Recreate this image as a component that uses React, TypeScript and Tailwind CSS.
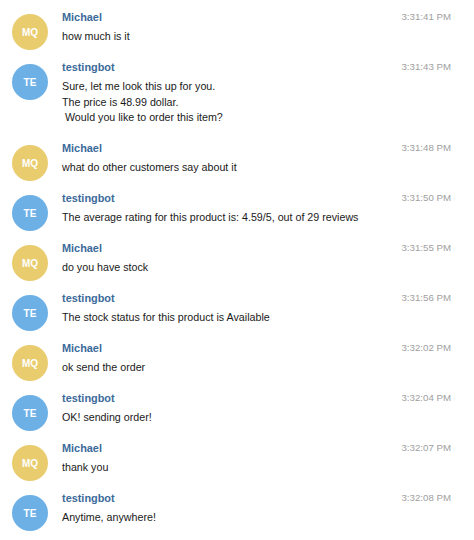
import React from "react";

type Msg = { who: "MQ" | "TE"; name: string; time: string; lines: string[] };

const msgs: Msg[] = [
  { who: "MQ", name: "Michael", time: "3:31:41 PM", lines: ["how much is it"] },
  {
    who: "TE",
    name: "testingbot",
    time: "3:31:43 PM",
    lines: ["Sure, let me look this up for you.", "The price is 48.99 dollar.", "\u00a0Would you like to order this item?"],
  },
  { who: "MQ", name: "Michael", time: "3:31:48 PM", lines: ["what do other customers say about it"] },
  {
    who: "TE",
    name: "testingbot",
    time: "3:31:50 PM",
    lines: ["The average rating for this product is: 4.59/5, out of 29 reviews"],
  },
  { who: "MQ", name: "Michael", time: "3:31:55 PM", lines: ["do you have stock"] },
  { who: "TE", name: "testingbot", time: "3:31:56 PM", lines: ["The stock status for this product is Available"] },
  { who: "MQ", name: "Michael", time: "3:32:02 PM", lines: ["ok send the order"] },
  { who: "TE", name: "testingbot", time: "3:32:04 PM", lines: ["OK! sending order!"] },
  { who: "MQ", name: "Michael", time: "3:32:07 PM", lines: ["thank you"] },
  { who: "TE", name: "testingbot", time: "3:32:08 PM", lines: ["Anytime, anywhere!"] },
];

export default function App() {
  return (
    <div
      className="w-[474px] h-[540px] bg-white overflow-hidden pt-[9px]"
      style={{ fontFamily: '"Liberation Sans", Arial, sans-serif' }}
    >
      {msgs.map((m, i) => (
        <div key={i} className="flex items-start pl-[12px] pr-[23px]">
          <div
            className={
              "w-[36px] h-[36px] rounded-full flex items-center justify-center text-white text-[10px] font-bold shrink-0 mt-[5px] " +
              (m.who === "MQ" ? "bg-[#e9cc6e]" : "bg-[#6cb0e6]")
            }
          >
            {m.who}
          </div>
          <div className="flex-1 ml-[14px] pb-[14.5px]">
            <div className="flex justify-between items-center h-[16px]">
              <span className="text-[10.9px] font-bold text-[#3b6a9a] leading-[16px]">{m.name}</span>
              <span className="text-[9.7px] text-[#a0a0a0] leading-[16px]">{m.time}</span>
            </div>
            <div className="mt-[4px] text-[10.7px] text-[#1a1a1a] leading-[15.5px]">
              {m.lines.map((l, j) => (
                <div key={j} className="whitespace-pre">{l}</div>
              ))}
            </div>
          </div>
        </div>
      ))}
    </div>
  );
}
